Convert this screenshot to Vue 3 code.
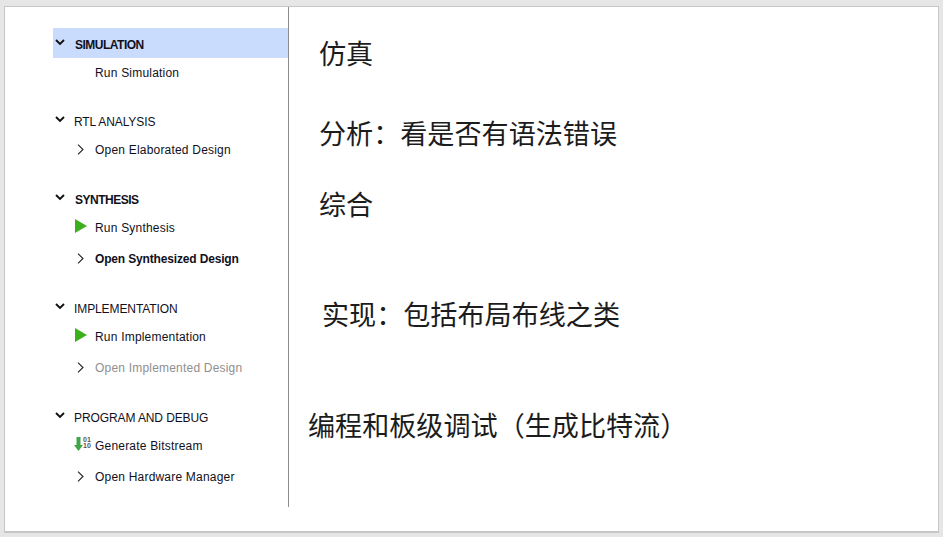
<script setup>
const sections = [
  {
    title: 'SIMULATION',
    bold: true,
    active: true,
    items: [{ label: 'Run Simulation' }]
  },
  {
    title: 'RTL ANALYSIS',
    items: [{ label: 'Open Elaborated Design', icon: 'arrow' }]
  },
  {
    title: 'SYNTHESIS',
    bold: true,
    items: [
      { label: 'Run Synthesis', icon: 'play' },
      { label: 'Open Synthesized Design', icon: 'arrow', bold: true }
    ]
  },
  {
    title: 'IMPLEMENTATION',
    items: [
      { label: 'Run Implementation', icon: 'play' },
      { label: 'Open Implemented Design', icon: 'arrow', muted: true }
    ]
  },
  {
    title: 'PROGRAM AND DEBUG',
    items: [
      { label: 'Generate Bitstream', icon: 'bits' },
      { label: 'Open Hardware Manager', icon: 'arrow' }
    ]
  }
]

const notes = [
  { text: '仿真', x: 314, y: 28 },
  { text: '分析：看是否有语法错误', x: 314, y: 108 },
  { text: '综合', x: 314, y: 179 },
  { text: '实现：包括布局布线之类', x: 317, y: 289 },
  { text: '编程和板级调试（生成比特流）', x: 303, y: 400 }
]
</script>

<template>
  <div class="page">
    <div class="slide">
      <nav class="flow">
        <section v-for="section in sections" :key="section.title" class="section">
          <div class="header" :class="{ active: section.active, bold: section.bold }">
            <svg class="chevron" width="10" height="7" viewBox="0 0 10 7">
              <path d="M1 1 L5 5 L9 1" fill="none" stroke="#111" stroke-width="1.9" />
            </svg>
            <span>{{ section.title }}</span>
          </div>
          <div
            v-for="item in section.items"
            :key="item.label"
            class="item"
            :class="{ bold: item.bold, muted: item.muted }"
          >
            <span class="icon">
              <svg v-if="item.icon === 'arrow'" class="arrow" width="7" height="11" viewBox="0 0 7 11">
                <path d="M1 0.7 L6 5.5 L1 10.3" fill="none" stroke="#222" stroke-width="1.1" />
              </svg>
              <svg v-else-if="item.icon === 'play'" class="play" width="12" height="14" viewBox="0 0 12 14">
                <path d="M0 0 L12 7 L0 14 Z" fill="#3cb01c" />
              </svg>
              <span v-else-if="item.icon === 'bits'" class="bits">
                <svg width="9" height="14" viewBox="0 0 9 14">
                  <path d="M2.5 0 H6.5 V8 H9 L4.5 14 L0 8 H2.5 Z" fill="#3fa648" />
                </svg>
                <span class="bits-text">01<br />10</span>
              </span>
            </span>
            <span>{{ item.label }}</span>
          </div>
        </section>
      </nav>
      <p
        v-for="note in notes"
        :key="note.text"
        class="note"
        :style="{ left: note.x + 'px', top: note.y + 'px' }"
      >
        {{ note.text }}
      </p>
    </div>
  </div>
</template>

<style scoped>
.page {
  width: 943px;
  height: 537px;
  box-sizing: border-box;
  padding: 6px 4px 4px 4px;
  background-color: #e6e6e6;
}

.slide {
  position: relative;
  width: 935px;
  height: 527px;
  box-sizing: border-box;
  background-color: #fff;
  border: 1px solid #c6c6c6;
  border-bottom-width: 2px;
}

.flow {
  width: 284px;
  height: 500px;
  box-sizing: border-box;
  padding: 21px 0 0 48px;
  border-right: 1px solid #8c8c8c;
  font-family: "Liberation Sans", Arial, sans-serif;
  font-size: 12px;
  color: #10101c;
}

.section {
  margin-bottom: 22px;
}

.section:first-child {
  margin-bottom: 21px;
}

.header {
  display: flex;
  align-items: center;
  box-sizing: border-box;
  height: 28px;
  padding-top: 2px;
  letter-spacing: -0.1px;
}

.header.active {
  height: 30px;
  padding-top: 4px;
  background-color: #c9dcfd;
}

.chevron {
  margin: 0 9px 6px 2px;
  flex: none;
}

.bold {
  font-weight: bold;
}

.header.bold {
  letter-spacing: -0.5px;
}

.header.bold span {
  padding-left: 1px;
}

.item {
  display: flex;
  align-items: center;
  box-sizing: border-box;
  height: 28px;
  margin-bottom: 3px;
  padding: 2px 0 0 22px;
  letter-spacing: 0.2px;
}

.item.bold {
  letter-spacing: -0.16px;
}

.section .item:last-child {
  margin-bottom: 0;
}

.item.muted {
  color: #8f8f8f;
}

.icon {
  display: flex;
  align-items: center;
  width: 20px;
  height: 16px;
  flex: none;
}

.arrow {
  margin-left: 2px;
  margin-bottom: 2px;
}

.play {
  margin-bottom: 4px;
}

.bits {
  display: flex;
  align-items: flex-start;
  margin: 0 0 4px -1px;
}

.bits-text {
  font-size: 7px;
  line-height: 6px;
  color: #555;
  font-weight: bold;
  letter-spacing: 0;
}

.note {
  position: absolute;
  margin: 0;
  font-family: "Noto Sans CJK SC", sans-serif;
  font-size: 27.1px;
  line-height: 36px;
  color: #1c1c1c;
  white-space: nowrap;
}
</style>
